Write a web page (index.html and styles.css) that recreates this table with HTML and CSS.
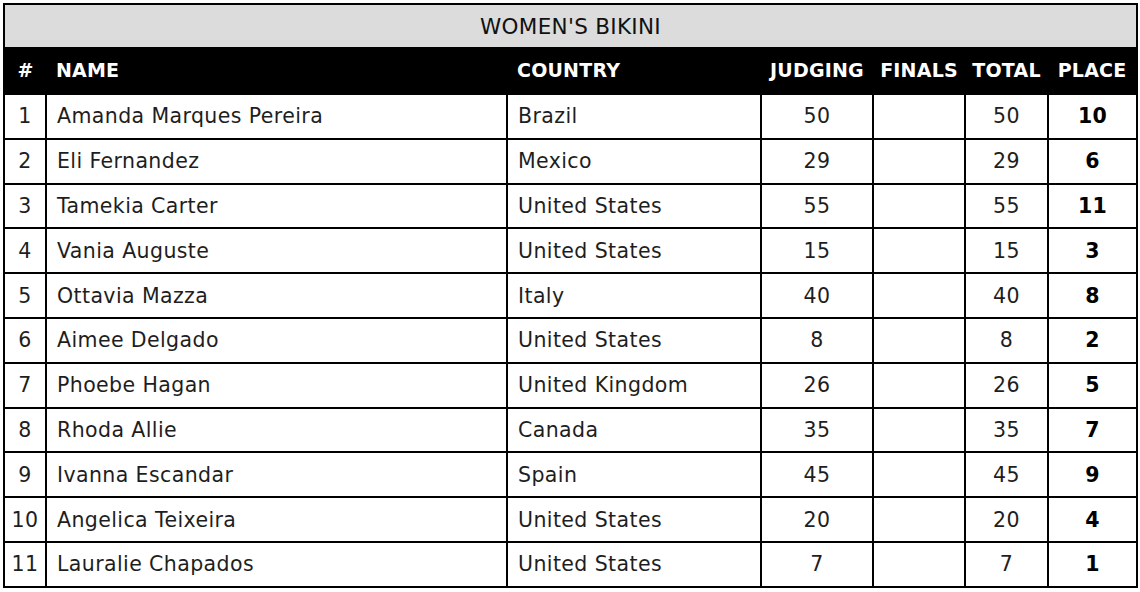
FILE: index.html
```html
<!DOCTYPE html>
<html lang="en">
<head>
<meta charset="utf-8">
<title>Women's Bikini</title>
<link rel="stylesheet" href="styles.css">
</head>
<body>
<table class="results">
  <colgroup>
    <col class="c-num">
    <col class="c-name">
    <col class="c-country">
    <col class="c-judging">
    <col class="c-finals">
    <col class="c-total">
    <col class="c-place">
  </colgroup>
  <thead>
    <tr class="title-row"><th colspan="7">WOMEN'S BIKINI</th></tr>
    <tr class="head-row">
      <th class="center">#</th>
      <th class="left">NAME</th>
      <th class="left">COUNTRY</th>
      <th class="center">JUDGING</th>
      <th class="center">FINALS</th>
      <th class="center">TOTAL</th>
      <th class="center">PLACE</th>
    </tr>
  </thead>
  <tbody>
    <tr><td class="center">1</td><td>Amanda Marques Pereira</td><td>Brazil</td><td class="center">50</td><td></td><td class="center">50</td><td class="center place">10</td></tr>
    <tr><td class="center">2</td><td>Eli Fernandez</td><td>Mexico</td><td class="center">29</td><td></td><td class="center">29</td><td class="center place">6</td></tr>
    <tr><td class="center">3</td><td>Tamekia Carter</td><td>United States</td><td class="center">55</td><td></td><td class="center">55</td><td class="center place">11</td></tr>
    <tr><td class="center">4</td><td>Vania Auguste</td><td>United States</td><td class="center">15</td><td></td><td class="center">15</td><td class="center place">3</td></tr>
    <tr><td class="center">5</td><td>Ottavia Mazza</td><td>Italy</td><td class="center">40</td><td></td><td class="center">40</td><td class="center place">8</td></tr>
    <tr><td class="center">6</td><td>Aimee Delgado</td><td>United States</td><td class="center">8</td><td></td><td class="center">8</td><td class="center place">2</td></tr>
    <tr><td class="center">7</td><td>Phoebe Hagan</td><td>United Kingdom</td><td class="center">26</td><td></td><td class="center">26</td><td class="center place">5</td></tr>
    <tr><td class="center">8</td><td>Rhoda Allie</td><td>Canada</td><td class="center">35</td><td></td><td class="center">35</td><td class="center place">7</td></tr>
    <tr><td class="center">9</td><td>Ivanna Escandar</td><td>Spain</td><td class="center">45</td><td></td><td class="center">45</td><td class="center place">9</td></tr>
    <tr><td class="center">10</td><td>Angelica Teixeira</td><td>United States</td><td class="center">20</td><td></td><td class="center">20</td><td class="center place">4</td></tr>
    <tr><td class="center">11</td><td>Lauralie Chapados</td><td>United States</td><td class="center">7</td><td></td><td class="center">7</td><td class="center place">1</td></tr>
  </tbody>
</table>
</body>
</html>
```

FILE: styles.css
```css
html, body {
  margin: 0;
  padding: 0;
  background: #ffffff;
}

body {
  padding: 3px 0 0 3px;
  font-family: "DejaVu Sans", "Liberation Sans", sans-serif;
  color: #1e1e1e;
}

.results {
  width: 1135px;
  table-layout: fixed;
  border-collapse: collapse;
  border: 2px solid #000;
}

.c-num { width: 42px; }
.c-name { width: 461px; }
.c-country { width: 254px; }
.c-judging { width: 112px; }
.c-finals { width: 92px; }
.c-total { width: 83px; }
.c-place { width: 89px; }

.title-row th {
  background: #dcdcdc;
  height: 42px;
  padding: 0;
  font-size: 21.5px;
  font-weight: normal;
  color: #111;
  text-align: center;
  letter-spacing: 0.3px;
}

.head-row th {
  background: #000;
  color: #fff;
  height: 46px;
  padding: 0;
  font-size: 19px;
  font-weight: bold;
  letter-spacing: 0.2px;
}

.head-row th.left {
  text-align: left;
  padding-left: 10px;
}

.center {
  text-align: center;
}

.results td {
  border: 2px solid #000;
  height: 42.8px;
  padding: 0 0 0 10px;
  font-size: 20.5px;
  letter-spacing: 0.4px;
  white-space: nowrap;
}

.results td.center {
  padding: 0;
}

.results td.place {
  font-weight: bold;
  color: #000;
}
```
